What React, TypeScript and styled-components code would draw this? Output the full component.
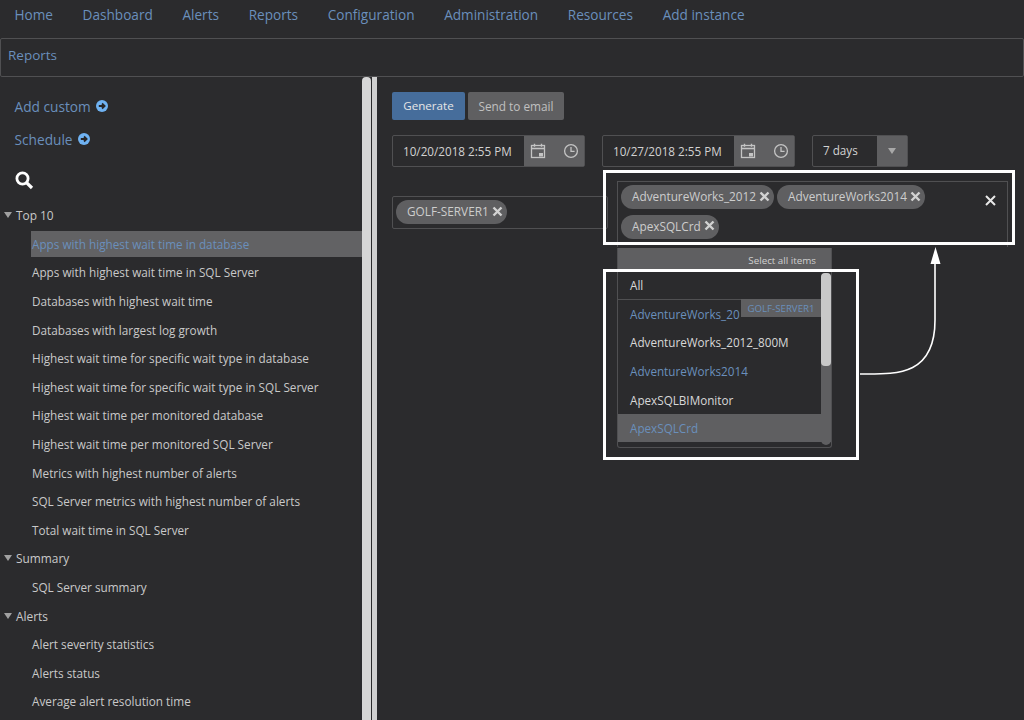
import React from "react";
import styled, { createGlobalStyle } from "styled-components";

const Global = createGlobalStyle`
  html, body { margin: 0; padding: 0; background: #2b2b2d; }
  body { font-family: "Open Sans", "Liberation Sans", sans-serif; overflow: hidden; }
  * { box-sizing: border-box; }
`;
const Page = styled.div`
  width: 1024px; height: 720px; background: #2b2b2d; overflow: hidden; position: relative;
  display: flex; flex-direction: column;
`;
const Nav = styled.nav`
  height: 38px; flex: none; display: flex; align-items: flex-start; gap: 29.7px; padding: 5px 0 0 14.5px;
`;
const NavItem = styled.span`
  font-size: 13.6px; line-height: 19px; color: #6a8fbc;
`;
const TabBar = styled.div`
  height: 39px; flex: none; border: 1px solid #505052; border-radius: 2px; padding: 7px 0 0 7px;
  font-size: 13.5px; line-height: 19px; color: #6a8fbc;
`;
const Body = styled.div`flex: 1; display: flex; min-height: 0;`;
const Sidebar = styled.aside`
  width: 362px; flex: none; overflow: hidden; padding-top: 19px;
`;
const Action = styled.div`
  display: flex; align-items: center; gap: 5px; height: 20px; margin: 0 0 13px 14.5px;
  font-size: 13.7px; color: #6a8fbc;
`;
const SearchWrap = styled.div`height: 20px; margin: 21.5px 0 10.5px 15px; display: flex;`;
const Head = styled.div`
  height: 28.6px; display: flex; align-items: center; gap: 4px; padding-left: 4px;
  font-size: 11.9px; color: #c9c9c9;
`;
const Tri = styled.span`
  width: 0; height: 0; border-left: 4px solid transparent; border-right: 4px solid transparent;
  border-top: 6px solid #a0a0a0;
`;
const Item = styled.div<{ $active?: boolean }>`
  height: 28.6px; margin-left: 31px; padding-left: 1px; display: flex; align-items: center;
  font-size: 11.75px; white-space: nowrap;
  color: ${(p) => (p.$active ? "#6a8fbc" : "#c9c9c9")};
  background: ${(p) => (p.$active ? "linear-gradient(#0000 0 1px,#626264 1px 27px,#0000 27px)" : "none")};
`;
const Scroll = styled.div`
  width: 15px; flex: none; display: flex; gap: 1px;
  &::before { content: ""; width: 9px; background: #d6d6d6; border-radius: 4px 4px 0 0; }
  &::after { content: ""; width: 5px; background: #d0d0d0; }
`;
const Main = styled.main`
  flex: 1; padding: 15px 0 0 15px; display: flex; flex-direction: column; align-items: flex-start;
`;
const Buttons = styled.div`display: flex; gap: 3px;`;
const Btn = styled.div<{ $primary?: boolean }>`
  height: 28px; width: ${(p) => (p.$primary ? 73 : 96)}px; padding-bottom: 1px; display: flex; align-items: center; justify-content: center; border-radius: 2px;
  font-size: ${(p) => (p.$primary ? 11.6 : 11.8)}px; font-weight: ${(p) => (p.$primary ? 500 : 400)};
  color: ${(p) => (p.$primary ? "#e6e6e6" : "#c0c0c0")};
  background: ${(p) => (p.$primary ? "#466d9b" : "#5f5f61")};
`;
const DateRow = styled.div`display: flex; gap: 17px; margin-top: 15px;`;
const Field = styled.div`
  width: 193px; height: 32px; display: flex; border: 1px solid #505052; border-radius: 2px;
`;
const DateText = styled.div`
  width: 131px; padding: 0 0 1px 10px; display: flex; align-items: center; font-size: 11.7px; color: #d2d2d2; white-space: nowrap;
`;
const Addon = styled.div`
  flex: 1; background: #5f5f61; display: flex; align-items: center; justify-content: space-between; padding: 0 5px 0 6px;
`;
const SelectBox = styled.div`
  width: 96px; height: 32px; display: flex; border: 1px solid #505052; border-radius: 2px;
`;
const SelectText = styled.div`
  width: 64px; padding: 0 0 3px 10px; display: flex; align-items: center; font-size: 11.7px; color: #d2d2d2;
`;
const SelectBtn = styled.div`
  flex: 1; background: #5f5f61; display: flex; align-items: center; justify-content: center;
  &::after { content: ""; border-left: 4px solid transparent; border-right: 4px solid transparent; border-top: 6px solid #a8a8a8; }
`;
const ServerBox = styled.div`
  width: 216px; height: 33px; margin-top: 29px; border: 1px solid #505052; border-radius: 2px; padding: 3px;
  display: flex; align-items: flex-start;
`;
const Chip = styled.span`
  height: 24px; padding: 0 4px 2px 11px; border-radius: 12px; background: #5f5f61; display: inline-flex; align-items: center; gap: 3px;
  font-size: 11.8px; color: #cdcdcd; white-space: nowrap;
`;
const DbBox = styled.div`
  position: absolute; left: 617px; top: 181px; width: 391px; height: 66px; border: 1px solid #505052; border-bottom: none;
  padding: 3px; display: flex; flex-wrap: wrap; align-content: flex-start; gap: 5.5px 3px; padding-right: 70px; background: #2b2b2d;
`;
const ClearX = styled.svg`position: absolute; right: 11px; top: 13px;`;
const Panel = styled.div`
  position: absolute; left: 617px; top: 248px; width: 215px; height: 200px; background: #2b2b2d;
  border: 1px solid #505052; border-top: none; border-radius: 0 0 3px 3px; overflow: hidden;
`;
const SelectAll = styled.div`
  height: 24px; background: #5f5f61; font-size: 9.8px; font-weight: 500; color: #cfcfcf; text-align: right; padding: 6px 15px 0 0;
`;
const Opt = styled.div<{ $c?: string; $bg?: boolean; $sep?: boolean }>`
  height: ${(p) => (p.$sep ? 27.5 : 28.6)}px; padding-left: 12px; display: flex; align-items: center; font-size: 11.7px; white-space: nowrap;
  color: ${(p) => p.$c || "#d8d8d8"};
  background: ${(p) => (p.$bg ? "#5f5f61" : "none")};
  border-bottom: ${(p) => (p.$sep ? "1px solid #505052" : "none")};
`;
const Track = styled.div`
  position: absolute; right: 0; top: 25px; width: 10px; bottom: 2px; background: #5f5f61; border-radius: 5px;
  &::before { content: ""; display: block; height: 93px; background: #c8c8c8; border-radius: 4px; }
`;
const Tip = styled.div`
  position: absolute; left: 741px; top: 299px; width: 80px; height: 18px; background: #5f5f61;
  font-size: 9.7px; font-weight: 500; color: #6a8fbc; display: flex; align-items: center; justify-content: center;
`;
const Mark = styled.div<{ $w: number; $h: number; $x: number; $y: number }>`
  position: absolute; left: ${(p) => p.$x}px; top: ${(p) => p.$y}px; width: ${(p) => p.$w}px; height: ${(p) => p.$h}px;
  border: 3px solid #fff; pointer-events: none;
`;
const Arrow = styled.svg`position: absolute; left: 855px; top: 245px;`;

const Go = () => (
  <svg width="12" height="12" viewBox="0 0 12 12">
    <circle cx="6" cy="6" r="6" fill="#6fb2f2" />
    <path d="M2.8 6H8M6 3.5 8.6 6 6 8.5" fill="none" stroke="#262628" strokeWidth="1.8" />
  </svg>
);
const X = ({ s = 11 }: { s?: number }) => (
  <svg width={s} height={s} viewBox="0 0 11 11">
    <path d="M1.5 1.5 9.5 9.5M9.5 1.5 1.5 9.5" stroke="#d2d2d2" strokeWidth="2.4" />
  </svg>
);
const Cal = () => (
  <svg width="16" height="16" viewBox="0 0 16 16" fill="none" stroke="#c4c4c4">
    <rect x="1.5" y="2.5" width="13" height="12" strokeWidth="1.3" />
    <path d="M1.5 5.5h13" strokeWidth="1.6" />
    <path d="M4.5 .8v3M11.5 .8v3" strokeWidth="1.4" />
    <rect x="9" y="10" width="4" height="3.5" fill="#c4c4c4" stroke="none" />
  </svg>
);
const Clock = () => (
  <svg width="16" height="16" viewBox="0 0 16 16" fill="none" stroke="#c4c4c4" strokeWidth="1.3">
    <circle cx="8" cy="8" r="6.4" />
    <path d="M8 4v4.3h3.6" />
  </svg>
);
const DateField = ({ v }: { v: string }) => (
  <Field>
    <DateText>{v}</DateText>
    <Addon><Cal /><Clock /></Addon>
  </Field>
);

const top = [
  "Apps with highest wait time in database",
  "Apps with highest wait time in SQL Server",
  "Databases with highest wait time",
  "Databases with largest log growth",
  "Highest wait time for specific wait type in database",
  "Highest wait time for specific wait type in SQL Server",
  "Highest wait time per monitored database",
  "Highest wait time per monitored SQL Server",
  "Metrics with highest number of alerts",
  "SQL Server metrics with highest number of alerts",
  "Total wait time in SQL Server",
];
const navs = ["Home", "Dashboard", "Alerts", "Reports", "Configuration", "Administration", "Resources", "Add instance"];

export default function App() {
  return (
    <Page>
      <Global />
      <Nav>{navs.map((n) => <NavItem key={n}>{n}</NavItem>)}</Nav>
      <TabBar>Reports</TabBar>
      <Body>
        <Sidebar>
          <Action>Add custom <Go /></Action>
          <Action>Schedule <Go /></Action>
          <SearchWrap>
            <svg width="19" height="19" viewBox="0 0 19 19" fill="none" stroke="#fff">
              <circle cx="7.5" cy="7.5" r="5.6" strokeWidth="2.8" />
              <path d="M11.8 11.8 17 17" strokeWidth="3.2" />
            </svg>
          </SearchWrap>
          <Head><Tri />Top 10</Head>
          {top.map((t, i) => <Item key={t} $active={i === 0}>{t}</Item>)}
          <Head><Tri />Summary</Head>
          <Item>SQL Server summary</Item>
          <Head><Tri />Alerts</Head>
          <Item>Alert severity statistics</Item>
          <Item>Alerts status</Item>
          <Item>Average alert resolution time</Item>
        </Sidebar>
        <Scroll />
        <Main>
          <Buttons>
            <Btn $primary>Generate</Btn>
            <Btn>Send to email</Btn>
          </Buttons>
          <DateRow>
            <DateField v="10/20/2018 2:55 PM" />
            <DateField v="10/27/2018 2:55 PM" />
            <SelectBox><SelectText>7 days</SelectText><SelectBtn /></SelectBox>
          </DateRow>
          <ServerBox><Chip>GOLF-SERVER1 <X /></Chip></ServerBox>
        </Main>
      </Body>

      <DbBox>
        <Chip>AdventureWorks_2012 <X /></Chip>
        <Chip>AdventureWorks2014 <X /></Chip>
        <Chip>ApexSQLCrd <X /></Chip>
        <ClearX width="11" height="11" viewBox="0 0 11 11">
          <path d="M1 1 10 10M10 1 1 10" stroke="#e8e8e8" strokeWidth="2" />
        </ClearX>
      </DbBox>
      <Panel>
        <SelectAll>Select all items</SelectAll>
        <Opt $sep>All</Opt>
        <Opt $c="#6a8fbc">AdventureWorks_20</Opt>
        <Opt>AdventureWorks_2012_800M</Opt>
        <Opt $c="#6a8fbc">AdventureWorks2014</Opt>
        <Opt>ApexSQLBIMonitor</Opt>
        <Opt $c="#6a8fbc" $bg>ApexSQLCrd</Opt>
        <Track />
      </Panel>
      <Tip>GOLF-SERVER1</Tip>
      <Mark $x={603} $y={170} $w={412} $h={75} />
      <Mark $x={603} $y={269} $w={256} $h={191} />
      <Arrow width="95" height="135" viewBox="0 0 95 135">
        <path d="M5 129C40 129 80 132 80 75V15" fill="none" stroke="#fff" strokeWidth="1.6" />
        <path d="M75.5 19 80.5 2 85.5 19Z" fill="#fff" />
      </Arrow>
    </Page>
  );
}
